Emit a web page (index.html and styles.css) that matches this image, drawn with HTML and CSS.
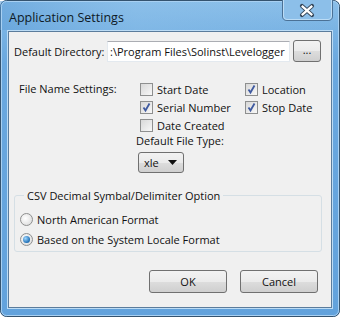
FILE: index.html
```html
<!DOCTYPE html>
<html>
<head>
<meta charset="utf-8">
<link rel="stylesheet" href="styles.css">
</head>
<body>
<div class="frame">
  <svg class="chrome" width="340" height="317" viewBox="0 0 340 317">
    <defs>
      <linearGradient id="fg" x1="0" y1="0" x2="0" y2="1">
        <stop offset="0" stop-color="#8bbfe9"/>
        <stop offset="0.1" stop-color="#78b2e3"/>
        <stop offset="0.2" stop-color="#6aa8df"/>
        <stop offset="1" stop-color="#62a2dc"/>
      </linearGradient>
      <linearGradient id="tg" x1="0" y1="0" x2="1" y2="0">
        <stop offset="0" stop-color="#5d9dd7" stop-opacity="0.9"/>
        <stop offset="0.4" stop-color="#8cc0ea" stop-opacity="0.6"/>
        <stop offset="1" stop-color="#8cc0ea" stop-opacity="0"/>
      </linearGradient>
    </defs>
    <rect x="0.5" y="0.5" width="339" height="316" rx="6" ry="6" fill="#6aa8df"/>
    <rect x="0.5" y="0.5" width="339" height="316" rx="6" ry="6" fill="url(#fg)" stroke="#34536f"/>
    <rect x="0" y="1" width="340" height="29" fill="url(#tg)" opacity="0.6"/>
    <rect x="1.5" y="1.5" width="337" height="314" rx="5" ry="5" fill="none" stroke="#a8d0f2"/>
  </svg>
  <div class="titlebar">
    <span class="title">Application Settings</span>
    <svg class="close" width="51" height="21" viewBox="0 0 51 21">
      <path d="M0.5 0 V16 Q0.5 20.5 5 20.5 H46 Q50.5 20.5 50.5 16 V0" fill="#8cbfe9" stroke="#4b7196"/>
      <path d="M1.5 0 V16 Q1.5 19.5 5 19.5 H46 Q49.5 19.5 49.5 16 V0" fill="none" stroke="#bcdcf5"/>
      <path d="M20 6 L30 15 M30 6 L20 15" stroke="#35475a" stroke-width="4.2" stroke-linecap="round"/>
      <path d="M20.6 6.6 L29.4 14.4 M29.4 6.6 L20.6 14.4" stroke="#ffffff" stroke-width="2.2" stroke-linecap="square"/>
    </svg>
  </div>
  <div class="client">
    <div class="dir-row">
      <span class="label">Default Directory:</span>
      <div class="textbox"><span>:\Program Files\Solinst\Levelogger</span></div>
      <div class="btn small">...</div>
    </div>
    <div class="fn-row">
      <span class="label fn-label">File Name Settings:</span>
      <div class="fn-right">
        <div class="checks">
          <div class="chk"><span class="box"></span>Start Date</div>
          <div class="chk"><span class="box on"><svg width="11" height="11" viewBox="0 0 11 11"><path d="M2.5 5.5 L4.5 8.5 L8.5 1.5" stroke="#3f5aa0" stroke-width="1.8" fill="none"/></svg></span>Location</div>
          <div class="chk"><span class="box on"><svg width="11" height="11" viewBox="0 0 11 11"><path d="M2.5 5.5 L4.5 8.5 L8.5 1.5" stroke="#3f5aa0" stroke-width="1.8" fill="none"/></svg></span>Serial Number</div>
          <div class="chk"><span class="box on"><svg width="11" height="11" viewBox="0 0 11 11"><path d="M2.5 5.5 L4.5 8.5 L8.5 1.5" stroke="#3f5aa0" stroke-width="1.8" fill="none"/></svg></span>Stop Date</div>
          <div class="chk"><span class="box"></span>Date Created</div>
        </div>
        <div class="ftype">Default File Type:</div>
        <div class="select"><span>xle</span><svg width="9" height="5" viewBox="0 0 9 5"><path d="M0 0 H9 L4.5 5 Z" fill="#111"/></svg></div>
      </div>
    </div>
    <fieldset class="group">
      <legend>CSV Decimal Symbal/Delimiter Option</legend>
      <div class="radio"><span class="circle"></span>North American Format</div>
      <div class="radio"><span class="circle sel"><span class="dot"></span></span>Based on the System Locale Format</div>
    </fieldset>
    <div class="buttons">
      <div class="btn big">OK</div>
      <div class="btn big">Cancel</div>
    </div>
  </div>
</div>
</body>
</html>
```
FILE: styles.css
```css
* { box-sizing: border-box; }
html, body { margin: 0; padding: 0; }
body { width: 340px; height: 317px; overflow: hidden; font-family: "Open Sans", "Liberation Sans", sans-serif; font-size: 11px; color: #111; background-color: #ffffff; }
.frame {
  position: relative;
  width: 340px; height: 317px;
  padding: 0 8px 9px 8px;
  display: flex; flex-direction: column;
}
.chrome { position: absolute; left: 0; top: 0; z-index: 0; }
.titlebar {
  position: relative; z-index: 1;
  height: 31px;
  display: flex; align-items: flex-start; justify-content: space-between;
}
.title { font-size: 12.5px; color: #0e1a26; margin: 9px 0 0 1px; }
.close { display: block; margin-right: -1px; }
.client {
  position: relative; z-index: 1;
  flex: 1;
  background-color: #f0f0f0;
  border: 1px solid #5b7c9c;
  outline: 1px solid #bcdcf5;
  padding: 8px 8px 0 5px;
  display: flex; flex-direction: column;
}
.label { white-space: nowrap; }
.dir-row { display: flex; align-items: center; height: 22px; }
.dir-row .label { width: 93px; }
.textbox {
  width: 183px; height: 21px; background-color: #fff;
  border: 1px solid #e3e9ef; border-top-color: #abadb3;
  display: flex; align-items: center; padding-left: 2px; overflow: hidden; white-space: nowrap;
}
.btn {
  border: 1px solid #707070; border-radius: 3px;
  background-color: #e3e3e3;
  background-image: linear-gradient(180deg, #f2f2f2 0%, #ebebeb 50%, #dddddd 51%, #cfcfcf 100%);
  display: flex; align-items: center; justify-content: center;
}
.btn.small { width: 28px; height: 22px; margin-left: 3px; padding-bottom: 3px; }
.fn-row { display: flex; margin-top: 18px; }
.fn-label { margin-left: 5px; width: 121px; line-height: 17px; }
.fn-right { display: flex; flex-direction: column; }
.checks { display: grid; grid-template-columns: 105px auto; grid-auto-rows: 18.3px; }
.chk { display: flex; align-items: center; height: 18px; white-space: nowrap; }
.box {
  width: 13px; height: 13px; border: 1px solid #8e8f8f; margin-right: 4px;
  background-color: #ececec;
  background-image: linear-gradient(135deg, #d8d8d8, #f8f8f8);
  display: flex; align-items: center; justify-content: center;
}
.ftype { margin-left: -4px; line-height: 17px; margin-top: -3px; }
.select {
  width: 46px; height: 21px; margin-top: 3px; margin-left: -2px;
  border: 1px solid #707070; border-radius: 3px;
  background-color: #e3e3e3;
  background-image: linear-gradient(180deg, #f2f2f2 0%, #ebebeb 50%, #dddddd 51%, #cfcfcf 100%);
  display: flex; align-items: center; justify-content: space-between; padding: 0 6px 0 5px;
}
.group {
  margin: 15px 1px 0 0; padding: 7px 0 0 5px; height: 64px;
  border: 1px solid #d5dfe5; border-radius: 3px;
}
.group legend { padding: 0 3px; margin-left: 4px; line-height: 15px; }
.radio { display: flex; align-items: center; height: 20px; white-space: nowrap; }
.circle {
  width: 13px; height: 13px; border-radius: 50%; border: 1px solid #8e8f8f;
  background-color: #eee;
  background-image: radial-gradient(circle at 40% 40%, #fff, #d6d6d6);
  margin-right: 4px; display: flex; align-items: center; justify-content: center;
}
.dot { width: 7px; height: 7px; border-radius: 50%; background-color: #1f6fb5; background-image: radial-gradient(circle at 35% 35%, #9fd7ff, #1f6fb5 70%, #0d4a86); }
.buttons { display: flex; justify-content: flex-end; gap: 13px; margin-top: 18px; padding-right: 5px; }
.btn.big { width: 78px; height: 23px; }
```
